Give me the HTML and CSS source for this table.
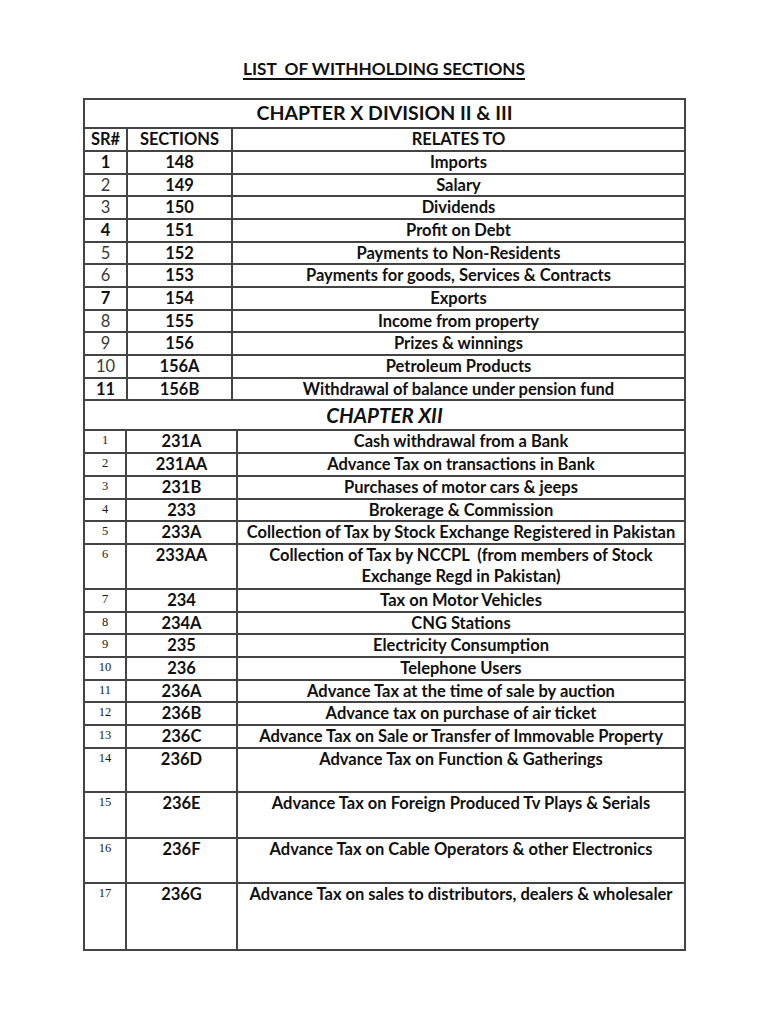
FILE: index.html
```html
<!DOCTYPE html>
<html lang="en">
<head>
<meta charset="utf-8">
<title>List of Withholding Sections</title>
<link rel="stylesheet" href="styles.css">
</head>
<body>
<div class="page">
  <h1 class="title">LIST  OF WITHHOLDING SECTIONS</h1>

  <table class="sheet sheet-one">
    <colgroup><col class="c-sr1"><col class="c-sec1"><col></colgroup>
    <tr class="chapter"><th colspan="3">CHAPTER X DIVISION II &amp; III</th></tr>
    <tr class="head"><th>SR#</th><th>SECTIONS</th><th>RELATES TO</th></tr>
    <tr><td class="sr strong">1</td><td>148</td><td>Imports</td></tr>
    <tr><td class="sr light">2</td><td>149</td><td>Salary</td></tr>
    <tr><td class="sr light">3</td><td>150</td><td>Dividends</td></tr>
    <tr><td class="sr strong">4</td><td>151</td><td>Profit on Debt</td></tr>
    <tr><td class="sr light">5</td><td>152</td><td>Payments to Non-Residents</td></tr>
    <tr><td class="sr light">6</td><td>153</td><td>Payments for goods, Services &amp; Contracts</td></tr>
    <tr><td class="sr strong">7</td><td>154</td><td>Exports</td></tr>
    <tr><td class="sr light">8</td><td>155</td><td>Income from property</td></tr>
    <tr><td class="sr light">9</td><td>156</td><td>Prizes &amp; winnings</td></tr>
    <tr><td class="sr light">10</td><td>156A</td><td>Petroleum Products</td></tr>
    <tr><td class="sr strong">11</td><td>156B</td><td>Withdrawal of balance under pension fund</td></tr>
  </table>

  <table class="sheet sheet-two">
    <colgroup><col class="c-sr2"><col class="c-sec2"><col></colgroup>
    <tr class="chapter chapter-xii"><th colspan="3">CHAPTER XII</th></tr>
    <tr><td class="num">1</td><td>231A</td><td>Cash withdrawal from a Bank</td></tr>
    <tr><td class="num">2</td><td>231AA</td><td>Advance Tax on transactions in Bank</td></tr>
    <tr><td class="num">3</td><td>231B</td><td>Purchases of motor cars &amp; jeeps</td></tr>
    <tr><td class="num">4</td><td>233</td><td>Brokerage &amp; Commission</td></tr>
    <tr><td class="num">5</td><td>233A</td><td>Collection of Tax by Stock Exchange Registered in Pakistan</td></tr>
    <tr class="two-line"><td class="num">6</td><td>233AA</td><td>Collection of Tax by NCCPL&nbsp; (from members of Stock<br>Exchange Regd in Pakistan)</td></tr>
    <tr class="r7"><td class="num">7</td><td>234</td><td>Tax on Motor Vehicles</td></tr>
    <tr class="r7"><td class="num">8</td><td>234A</td><td>CNG Stations</td></tr>
    <tr class="r7"><td class="num">9</td><td>235</td><td>Electricity Consumption</td></tr>
    <tr class="r7"><td class="num">10</td><td>236</td><td>Telephone Users</td></tr>
    <tr class="r7"><td class="num">11</td><td>236A</td><td>Advance Tax at the time of sale by auction</td></tr>
    <tr class="r7"><td class="num">12</td><td>236B</td><td>Advance tax on purchase of air ticket</td></tr>
    <tr class="r7"><td class="num">13</td><td>236C</td><td>Advance Tax on Sale or Transfer of Immovable Property</td></tr>
    <tr class="tall-a"><td class="num">14</td><td>236D</td><td>Advance Tax on Function &amp; Gatherings</td></tr>
    <tr class="tall-b"><td class="num">15</td><td>236E</td><td>Advance Tax on Foreign Produced Tv Plays &amp; Serials</td></tr>
    <tr class="tall-b"><td class="num">16</td><td>236F</td><td>Advance Tax on Cable Operators &amp; other Electronics</td></tr>
    <tr class="tall-c"><td class="num">17</td><td>236G</td><td>Advance Tax on sales to distributors, dealers &amp; wholesaler</td></tr>
  </table>
</div>
</body>
</html>
```

FILE: styles.css
```css
html, body {
  margin: 0;
  padding: 0;
  background: #ffffff;
}

.page {
  width: 768px;
  padding-top: 57px;
  font-family: "Lato", "Liberation Sans", sans-serif;
  color: #111;
}

.title {
  margin: 0 0 17px 0;
  text-align: center;
  font-size: 17.2px;
  line-height: 24px;
  font-weight: 700;
  white-space: pre;
  text-decoration: underline;
  text-decoration-thickness: 1.5px;
  text-underline-offset: 3px;
  color: #111;
}

.sheet {
  margin-left: 83px;
  width: 603px;
  border-collapse: collapse;
  table-layout: fixed;
  font-size: 16.5px;
  font-weight: 700;
}

.sheet th,
.sheet td {
  border: 2px solid #444;
  padding: 0;
  text-align: center;
  vertical-align: top;
  white-space: nowrap;
  line-height: 20.66px;
}

.c-sr1 { width: 43px; }
.c-sec1 { width: 105px; }
.c-sr2 { width: 42px; }
.c-sec2 { width: 111px; }

.sheet-one .chapter th {
  font-size: 19.5px;
  font-weight: 700;
  line-height: 26.7px;
}

.sheet-one .head th {
  line-height: 21.3px;
  font-weight: 700;
}

.sr {
  font-size: 16.5px;
}

.sr.strong { font-weight: 700; }
.sr.light { font-weight: 400; color: #3a3a3a; }

.sheet-two .chapter-xii th {
  border-top-style: hidden;
  font-size: 20.5px;
  font-style: italic;
  line-height: 28px;
}

.sheet-two td {
  line-height: 20.8px;
}

.sheet-two .r7 td {
  line-height: 20.63px;
}

.num {
  font-family: "Liberation Serif", "DejaVu Serif", serif;
  font-size: 12.5px;
  font-weight: 400;
  color: #1a1a1a;
}

.sheet-two td.num {
  line-height: 16px;
  padding-top: 1px;
}

.two-line td { padding-bottom: 1.4px; }
.tall-a td { padding-bottom: 21.5px; }
.tall-b td { padding-bottom: 22.9px; }
.tall-c td { padding-bottom: 44.2px; }

.two-line td.num,
.tall-a td.num,
.tall-b td.num,
.tall-c td.num { padding-bottom: 0; }
```
